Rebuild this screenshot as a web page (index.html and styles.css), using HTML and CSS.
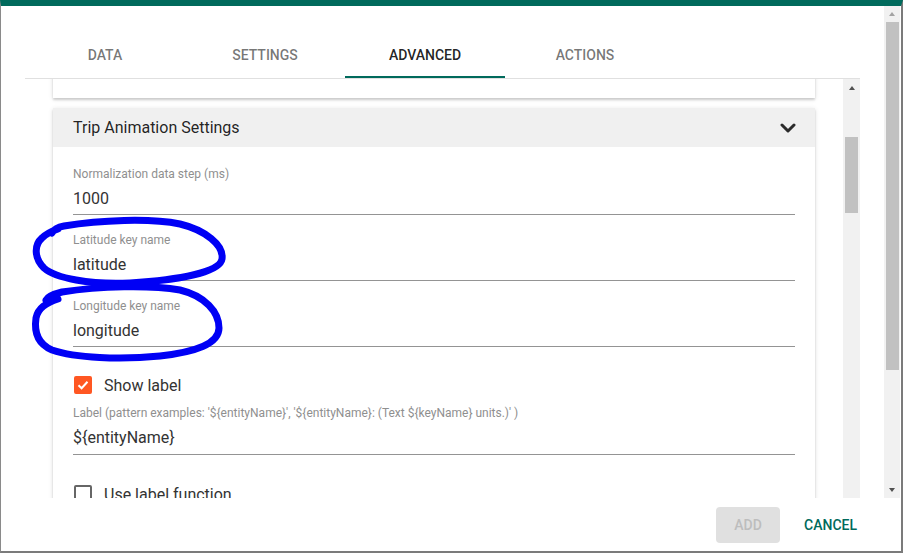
FILE: index.html
```html
<!DOCTYPE html>
<html lang="en">
<head>
  <meta charset="UTF-8" />
  <title>Widget settings</title>
  <link rel="stylesheet" href="styles.css">
</head>
<body>
  <div class="dialog">
    <div class="dialog-body">
      <div class="main">
        <div class="tabs">
          <div class="tab">Data</div>
          <div class="tab">Settings</div>
          <div class="tab active">Advanced</div>
          <div class="tab">Actions</div>
        </div>
        <div class="content">
          <div class="scroll-area">
            <div class="card-prev"></div>

            <div class="panel">
              <div class="panel-header">
                <span>Trip Animation Settings</span>
                <svg class="chevron" width="16" height="12" viewBox="0 0 16 12">
                  <polyline points="2,3 8,9 14,3" fill="none" stroke="#2b2b2b" stroke-width="3" stroke-linecap="round" stroke-linejoin="round"/>
                </svg>
              </div>
              <div class="panel-body">
                <div class="field">
                  <div class="field-label">Normalization data step (ms)</div>
                  <div class="field-value">1000</div>
                </div>
                <div class="field">
                  <div class="field-label">Latitude key name</div>
                  <div class="field-value">latitude</div>
                </div>
                <div class="field">
                  <div class="field-label">Longitude key name</div>
                  <div class="field-value">longitude</div>
                </div>

                <label class="check-row first">
                  <span class="box checked">
                    <svg width="14" height="14" viewBox="0 0 14 14"><polyline points="2.5,7.2 5.6,10.2 11.5,3.8" fill="none" stroke="#fff" stroke-width="2"/></svg>
                  </span>
                  <span>Show label</span>
                </label>

                <div class="field compact">
                  <div class="field-label">Label (pattern examples: '${entityName}', '${entityName}: (Text ${keyName} units.)' )</div>
                  <div class="field-value">${entityName}</div>
                </div>

                <label class="check-row second">
                  <span class="box"></span>
                  <span>Use label function</span>
                </label>
              </div>
            </div>
          </div>
          <div class="inner-scroll">
            <div class="arrow up dark"></div>
            <div class="thumb"></div>
          </div>
        </div>
      </div>
      <div class="page-scroll">
        <div class="arrow-cell"><div class="arrow up light"></div></div>
        <div class="page-thumb"></div>
        <div class="spacer"></div>
        <div class="arrow-cell"><div class="arrow down dark"></div></div>
      </div>
    </div>

    <div class="footer">
      <button class="btn btn-add" disabled>Add</button>
      <button class="btn btn-cancel">Cancel</button>
    </div>
  </div>

  <!-- hand-drawn marks over the two key name fields -->
  <svg class="marks" width="903" height="553" viewBox="0 0 903 553">
    <path d="M52 233 C54 229, 58 227, 64 226 C100 220, 150 218, 180 224 C205 230, 224 245, 222 259 C220 272, 180 280, 130 283 C90 285, 55 278, 44 268 C34 258, 34 245, 42 238 C46 234, 52 231, 58 229" />
    <path d="M46 300 C48 296, 54 294, 62 292 C100 286, 150 285, 180 290 C205 296, 219 312, 219 328 C219 344, 195 352, 160 356 C120 360, 75 358, 52 350 C38 344, 34 332, 36 318 C38 308, 46 303, 58 299" />
  </svg>
</body>
</html>
```

FILE: styles.css
```css
/* Base */
* { box-sizing:border-box; }
body { margin:0; font-family:Roboto, "Noto Sans", sans-serif; color:rgba(0,0,0,0.87); background:#fff; position:relative; }

/* Dialog frame */
.dialog { width:903px; height:553px; display:flex; flex-direction:column; border-top:6px solid #006a5c; border-left:1px solid #8a8a8a; border-right:2px solid #7b7b7b; border-bottom:2px solid #7b7b7b; background:#fff; }
.dialog-body { display:flex; height:492px; }
.main { flex:1; display:flex; flex-direction:column; padding:0 24px; min-width:0; }

/* Tabs */
.tabs { display:flex; padding-top:24px; border-bottom:1px solid #e0e0e0; }
.tab { width:160px; height:48px; padding-top:3px; display:flex; align-items:center; justify-content:center; font-size:14px; font-weight:500; text-transform:uppercase; color:rgba(0,0,0,0.54); border-bottom:2px solid transparent; }
.tab.active { color:rgba(0,0,0,0.87); border-bottom-color:#006a5c; }

/* Scrolling content */
.content { flex:1; display:flex; min-height:0; }
.scroll-area { flex:1; overflow:hidden; padding:0 28px; }
.card-prev { height:29px; margin-top:-10px; background:#fff; box-shadow:0 2px 2px 0 rgba(0,0,0,0.14), 0 1px 5px 0 rgba(0,0,0,0.12); }

.panel { margin-top:10px; background:#fff; box-shadow:0 2px 2px 0 rgba(0,0,0,0.14), 0 1px 5px 0 rgba(0,0,0,0.12); }
.panel-header { height:39px; background:#f0f0f0; display:flex; align-items:center; justify-content:space-between; padding:0 20px; font-size:16px; }
.chevron { margin-right:-1px; }
.panel-body { padding:2px 20px 40px; }

/* Form fields */
.field { padding:17px 0 5px; border-bottom:1px solid #949494; height:66px; }
.field-label { font-size:12px; line-height:16px; color:#8f8f8f; white-space:nowrap; }
.field-value { font-size:16px; line-height:20px; margin-top:7px; color:#333; }
.field.compact { padding-top:11px; padding-bottom:6px; height:auto; }

/* Checkboxes */
.check-row { display:flex; align-items:center; height:18px; font-size:16px; color:#333; }
.check-row.first { margin-top:29px; }
.check-row.second { margin-top:30px; }
.box { width:18px; height:18px; margin-left:1px; margin-right:12px; border:2px solid #666; border-radius:2px; display:flex; align-items:center; justify-content:center; }
.box.checked { background:#ff5722; border-color:#ff5722; }

/* Scrollbars */
.inner-scroll { width:17px; background:#f1f1f1; padding:0 2px; }
.inner-scroll .arrow { margin:7px auto 0; }
.thumb { height:76px; margin-top:47px; background:#c1c1c1; }
.page-scroll { width:16px; margin-right:1px; background:#f1f1f1; display:flex; flex-direction:column; }
.arrow-cell { height:16px; display:flex; align-items:center; justify-content:center; }
.page-thumb { height:348px; margin:0 1px 0 2px; background:#c1c1c1; }
.spacer { flex:1; }
.arrow { width:0; height:0; border-left:3.5px solid transparent; border-right:3.5px solid transparent; }
.arrow.up { border-bottom:4px solid #505050; }
.arrow.down { border-top:4px solid #505050; }
.arrow.up.light { border-bottom-color:#a3a3a3; }

/* Footer */
.footer { flex:1; display:flex; align-items:center; justify-content:flex-end; gap:8px; padding-right:28px; }
.btn { font-family:inherit; font-size:14px; font-weight:500; text-transform:uppercase; height:36px; min-width:64px; padding:0 16px; border:none; border-radius:4px; background:transparent; }
.btn-add { background:#e0e0e0; color:#bdbdbd; }
.btn-cancel { color:#006a5c; }

/* Marker overlay */
.marks { position:absolute; top:0; left:0; pointer-events:none; }
.marks path { fill:none; stroke:#0000f5; stroke-width:7; stroke-linecap:round; stroke-linejoin:round; }
```
